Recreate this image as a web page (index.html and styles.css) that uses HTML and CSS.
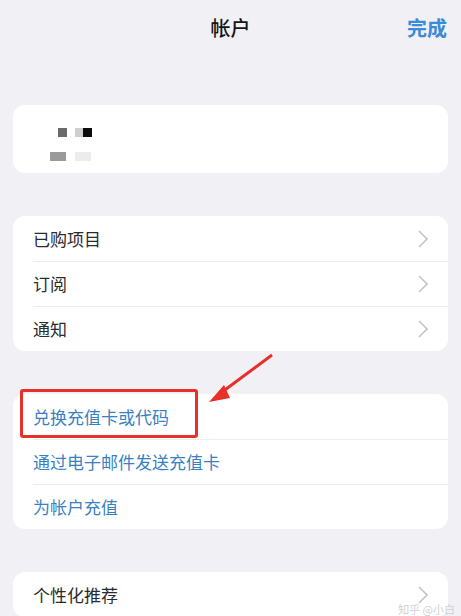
FILE: index.html
```html
<!DOCTYPE html>
<html>

<head lang="zh">
    <meta charset="UTF-8">
    <title>帐户</title>
    <link rel="stylesheet" href="styles.css">
</head>

<body>
    <div class="page">
        <!-- 顶部导航 -->
        <div class="nav">
            <span></span>
            <h1 class="nav-title">帐户</h1>
            <a href="#" class="nav-done">完成</a>
        </div>

        <!-- 用户信息（打码） -->
        <div class="card user">
            <div class="mosaic">
                <i class="px p1"></i><i class="px p2"></i><i class="px p3"></i>
            </div>
            <div class="mosaic">
                <i class="px p4"></i><i class="px p5"></i>
            </div>
        </div>

        <ul class="card list">
            <li class="row"><span>已购项目</span><svg class="chev" viewBox="0 0 10 18"><polyline points="1,1 9,9 1,17" /></svg></li>
            <li class="row"><span>订阅</span><svg class="chev" viewBox="0 0 10 18"><polyline points="1,1 9,9 1,17" /></svg></li>
            <li class="row"><span>通知</span><svg class="chev" viewBox="0 0 10 18"><polyline points="1,1 9,9 1,17" /></svg></li>
        </ul>

        <ul class="card list blue">
            <li class="row"><span>兑换充值卡或代码</span></li>
            <li class="row"><span>通过电子邮件发送充值卡</span></li>
            <li class="row"><span>为帐户充值</span></li>
        </ul>

        <ul class="card list">
            <li class="row"><span>个性化推荐</span><svg class="chev" viewBox="0 0 10 18"><polyline points="1,1 9,9 1,17" /></svg></li>
        </ul>

        <!-- 标注：红框 + 箭头 -->
        <div class="mark-box"></div>
        <svg class="mark-arrow" width="461" height="616" viewBox="0 0 461 616">
            <line x1="272" y1="355" x2="218" y2="395" />
            <polygon points="209,402 224,385 230,398" />
        </svg>
        <div class="watermark">知乎 @小白</div>
    </div>
</body>

</html>
```

FILE: styles.css
```css
/*初始化  reset*/
body,
h1,
ul,
li {
    margin: 0;
    padding: 0;
}

ul {
    list-style: none;
}

a {
    text-decoration: none;
}

body {
    background: #f1f0f5;
    font: 17px/1.4 "Noto Sans CJK SC", "Noto Sans", sans-serif;
    color: #2b2b2b;
}

.page {
    position: relative;
    width: 461px;
    height: 616px;
    overflow: hidden;
}

/* 导航 */
.nav {
    display: grid;
    grid-template-columns: 1fr auto 1fr;
    align-items: center;
    height: 56px;
    padding: 0 14px;
}

.nav-title {
    font-size: 20px;
    font-weight: 500;
    color: #161616;
}

.nav-done {
    justify-self: end;
    font-size: 20px;
    font-weight: 700;
    color: #3a8bd8;
}

/* 卡片 */
.card {
    background: #fff;
    margin: 0 13px 43px;
    border-radius: 12px;
}

.user {
    margin-top: 49px;
    height: 68px;
    padding: 23px 0 0 37px;
    box-sizing: border-box;
}

.mosaic {
    display: flex;
    height: 9px;
    margin-bottom: 15px;
}

.px {
    display: block;
    width: 9px;
    height: 9px;
}

.p1 { margin-left: 8px; background: #6a6a6a; }
.p2 { margin-left: 8px; width: 8px; background: #cfcfcf; }
.p3 { background: #0c0c0c; }
.p4 { width: 16px; background: #9a9a9a; }
.p5 { margin-left: 9px; width: 16px; background: #ececec; }

.row {
    display: flex;
    align-items: center;
    justify-content: space-between;
    height: 45px;
    box-sizing: border-box;
    margin-left: 20px;
    padding-right: 20px;
    border-top: 1px solid #ececef;
}

.row:first-child {
    border-top: 0;
}

.blue .row {
    color: #3a7fc0;
}

.chev {
    width: 10px;
    height: 18px;
    fill: none;
    stroke: #c5c5c8;
    stroke-width: 1.6;
}

/* 标注 */
.mark-box {
    position: absolute;
    left: 20px;
    top: 389px;
    width: 178px;
    height: 49px;
    box-sizing: border-box;
    border: 3px solid #e8302a;
    border-radius: 3px;
}

.mark-arrow {
    position: absolute;
    left: 0;
    top: 0;
}

.mark-arrow line {
    stroke: #e8302a;
    stroke-width: 3;
}

.mark-arrow polygon {
    fill: #e8302a;
}

.watermark {
    position: absolute;
    right: 6px;
    bottom: 0;
    font-size: 11px;
    line-height: 14px;
    color: #d0d0d4;
}
```
